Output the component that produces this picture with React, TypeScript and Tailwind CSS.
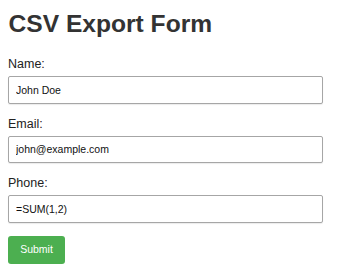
import React from "react";

const font = { fontFamily: '"Liberation Sans", Arial, Helvetica, sans-serif' };

function Field({ label, value }: { label: string; value: string }) {
  return (
    <div className="flex flex-col">
      <label className="block text-[12.5px] leading-[15px] text-[#222]">{label}</label>
      <input
        readOnly
        value={value}
        className="mt-[4px] h-[27.2px] w-[315px] rounded-[2px] border border-[#a6a6a6] bg-white px-[7px] text-[10.5px] text-[#111] shadow-[0_1px_1px_rgba(0,0,0,0.08)] outline-none"
      />
    </div>
  );
}

export default function App() {
  return (
    <div className="min-h-[279px] w-[360px] bg-white pl-[8px] pt-[9px]" style={font}>
      <h1 className="ml-[0.5px] text-[24.6px] font-bold leading-[29px] text-[#333]">CSV Export Form</h1>
      <div className="mt-[19.4px] flex flex-col gap-[13.3px]">
        <Field label="Name:" value="John Doe" />
        <Field label="Email:" value="john@example.com" />
        <Field label="Phone:" value="=SUM(1,2)" />
      </div>
      <button className="mt-[13.8px] h-[27.5px] w-[57px] rounded-[3px] bg-[#4caf50] text-[10.5px] text-white">
        Submit
      </button>
    </div>
  );
}
